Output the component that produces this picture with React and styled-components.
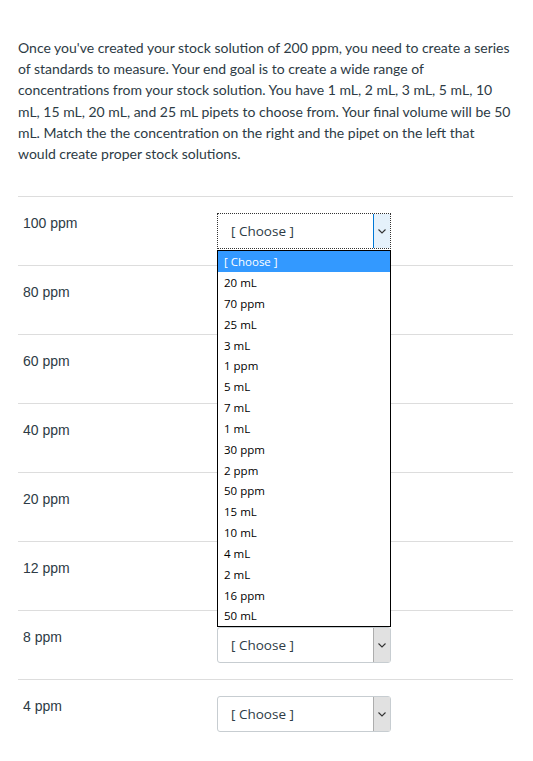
import React from "react";
import styled, { createGlobalStyle, css } from "styled-components";

const Global = createGlobalStyle`
  html, body { margin: 0; padding: 0; background: #fff; }
  * { box-sizing: border-box; }
`;

const Page = styled.div`
  padding: 37px 20px 0 18px;
  width: 533px;
  color: #2d3b45;
`;

const Intro = styled.p`
  margin: 0 0 32px 0;
  font-family: Lato, "Liberation Sans", sans-serif;
  font-size: 14px;
  line-height: 21.2px;
  color: #2d3b45;
`;

const Rows = styled.div`
  display: flex;
  flex-direction: column;
`;

const Row = styled.div`
  position: relative;
  display: grid;
  grid-template-columns: 199px 174px;
  height: 69px;
  border-top: 1px solid #dddddd;
`;

const Label = styled.div`
  padding: 17.5px 0 0 5px;
  font-family: "Liberation Sans", Arial, sans-serif;
  font-size: 14px;
  color: #2d3b45;
`;

const SelectBox = styled.div`
  margin-top: 16px;
  height: 36px;
  display: flex;
  align-items: stretch;
  border: 1px solid #c7cdd1;
  border-radius: 3px;
  background: #fff;
  ${(p) =>
    p.$open &&
    css`
      border: 1px dotted #333;
      border-radius: 0;
    `}
`;

const SelectText = styled.div`
  flex: 1;
  display: flex;
  align-items: center;
  padding-left: 13px;
  font-family: "Open Sans", "Noto Sans", sans-serif;
  font-size: 13.5px;
  color: #2d3b45;
  visibility: ${(p) => (p.$covered ? "hidden" : "visible")};
`;

const Arrow = styled.div`
  width: 17px;
  display: flex;
  align-items: center;
  justify-content: center;
  background: #e1e1e1;
  border-left: 1px solid #adadad;
  ${(p) =>
    p.$open &&
    css`
      background: #e5f1fb;
      border-left: 1px solid #0078d7;
    `}
`;

const List = styled.div`
  position: absolute;
  left: 199px;
  top: 53px;
  width: 174px;
  z-index: 5;
  background: #fff;
  border: 1px solid #000;
  display: flex;
  flex-direction: column;
`;

const Option = styled.div`
  height: 20.85px;
  display: flex;
  align-items: center;
  padding-left: 6px;
  font-family: "Open Sans", "Noto Sans", sans-serif;
  font-size: 11.5px;
  color: #000;
  ${(p) =>
    p.$active &&
    css`
      background: #3399ff;
      color: #fff;
    `}
`;

const Chevron = () => (
  <svg width="8" height="5" viewBox="0 0 8 5">
    <path d="M0.5 0.5 L4 4 L7.5 0.5" fill="none" stroke="#333" strokeWidth="1.1" />
  </svg>
);

const labels = ["100 ppm", "80 ppm", "60 ppm", "40 ppm", "20 ppm", "12 ppm", "8 ppm", "4 ppm"];
const options = [
  "[ Choose ]", "20 mL", "70 ppm", "25 mL", "3 mL", "1 ppm", "5 mL", "7 mL", "1 mL",
  "30 ppm", "2 ppm", "50 ppm", "15 mL", "10 mL", "4 mL", "2 mL", "16 ppm", "50 mL",
];

export default function App() {
  return (
    <>
      <Global />
      <Page>
        <Intro>
          Once you've created your stock solution of 200 ppm, you need to create a series
          of standards to measure. Your end goal is to create a wide range of
          concentrations from your stock solution. You have 1 mL, 2 mL, 3 mL, 5 mL, 10
          mL, 15 mL, 20 mL, and 25 mL pipets to choose from. Your final volume will be 50
          mL. Match the the concentration on the right and the pipet on the left that
          would create proper stock solutions.
        </Intro>
        <Rows>
          {labels.map((l, i) => (
            <Row key={l}>
              <Label>{l}</Label>
              <SelectBox $open={i === 0}>
                <SelectText $covered={i >= 1 && i <= 5}>[ Choose ]</SelectText>
                <Arrow $open={i === 0}>
                  <Chevron />
                </Arrow>
              </SelectBox>
              {i === 0 && (
                <List>
                  {options.map((o, j) => (
                    <Option key={j} $active={j === 0}>
                      {o}
                    </Option>
                  ))}
                </List>
              )}
            </Row>
          ))}
        </Rows>
      </Page>
    </>
  );
}
